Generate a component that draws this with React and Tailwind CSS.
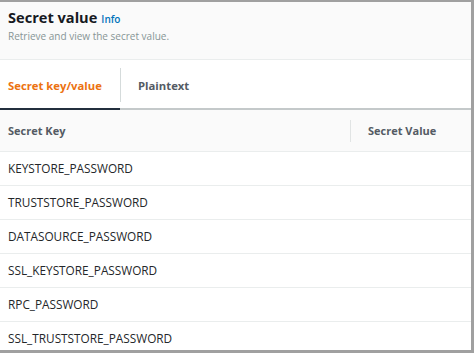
import React from "react";

const rows = [
  "KEYSTORE_PASSWORD",
  "TRUSTSTORE_PASSWORD",
  "DATASOURCE_PASSWORD",
  "SSL_KEYSTORE_PASSWORD",
  "RPC_PASSWORD",
  "SSL_TRUSTSTORE_PASSWORD",
];

export default function App() {
  return (
    <div
      className="w-[474px] h-[353px] overflow-hidden bg-white border-t-2 border-r-[3px] border-b-[3px] border-[#a0a0a0] flex flex-col"
      style={{ fontFamily: '"Open Sans", "Noto Sans", sans-serif' }}
    >
      {/* Header */}
      <div className="h-[58px] shrink-0 bg-[#fafafa] border-b border-[#eaeded] px-2 pt-[4px]">
        <div className="flex items-baseline gap-[4px]">
          <span className="text-[14.6px] font-bold text-[#16191f] leading-[22px]">Secret value</span>
          <span className="text-[10px] font-semibold text-[#0073bb]">Info</span>
        </div>
        <div className="text-[10px] text-[#879596] leading-[14px] mt-[1px]">
          Retrieve and view the secret value.
        </div>
      </div>

      {/* Tabs */}
      <div className="h-[50px] shrink-0 flex border-b-2 border-[#c4c9ca]">
        <div className="relative w-[120px] flex items-center px-2 pt-[4px]">
          <span className="text-[11.3px] font-bold text-[#ec7211]">Secret key/value</span>
          <div className="absolute left-0 right-0 -bottom-[2px] h-[2px] bg-[#232f3e]" />
        </div>
        <div className="w-px h-[34px] self-center mt-[2px] bg-[#d5dbdb]" />
        <div className="flex items-center pl-[17px] pt-[4px]">
          <span className="text-[11.3px] font-bold text-[#545b64]">Plaintext</span>
        </div>
      </div>

      {/* Table header */}
      <div className="h-[42px] shrink-0 flex items-center bg-[#fafafa] border-b border-[#eaeded] pt-[1px]">
        <div className="w-[350px] px-2 text-[11px] font-bold text-[#545b64]">Secret Key</div>
        <div className="w-px h-[22px] bg-[#e1e4e4]" />
        <div className="pl-[17px] text-[11px] font-bold text-[#545b64]">Secret Value</div>
      </div>

      {/* Rows */}
      <div className="flex flex-col">
        {rows.map((r, i) => (
          <div
            key={r}
            className={
              "h-[34px] shrink-0 flex items-center px-2 text-[11.8px] text-[#232629] " +
              (i < rows.length - 1 ? "border-b border-[#eaeded]" : "")
            }
          >
            {r}
          </div>
        ))}
      </div>
    </div>
  );
}
